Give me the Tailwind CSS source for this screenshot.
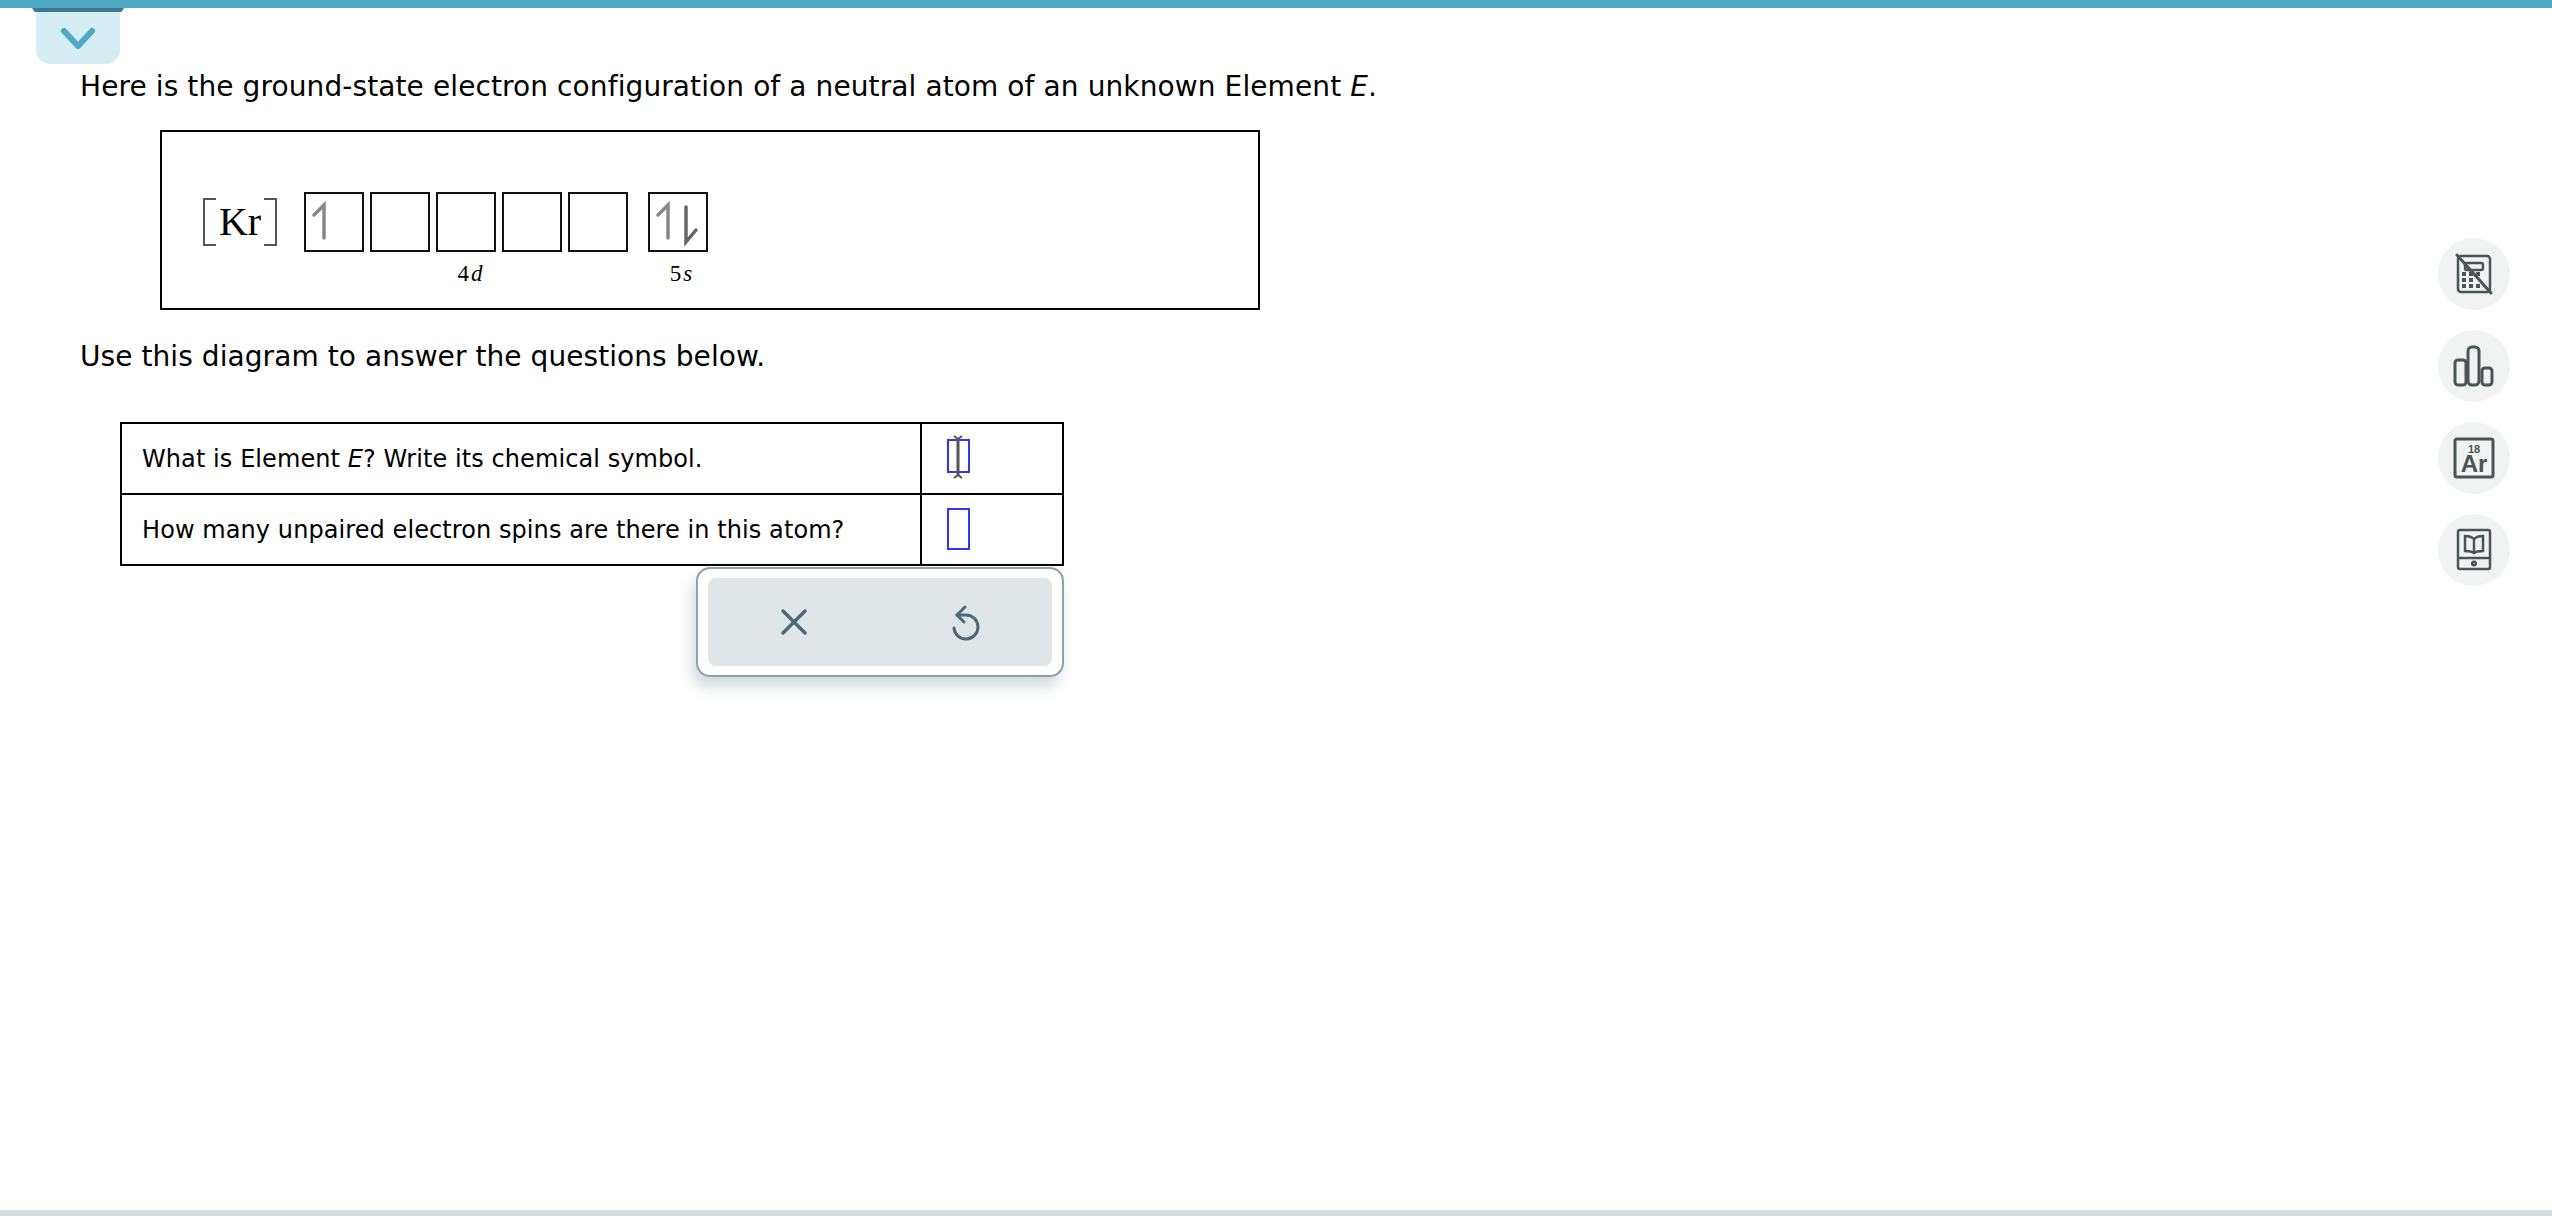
<!DOCTYPE html>
<html lang="en">
<head>
  <meta charset="UTF-8" />
  <title>Electron configuration question</title>
  <script src="https://cdn.jsdelivr.net/npm/@tailwindcss/browser@4"></script>
</head>
<body class="bg-white font-['DejaVu_Sans',sans-serif] text-black">
<div class="relative flex flex-col h-[1216px] w-[2552px] overflow-hidden">

  <div class="h-2 bg-[#4fa9c6] shrink-0"></div>

  <!-- collapse tab -->
  <div class="absolute left-8 top-2 w-[92px] flex flex-col items-center">
    <div class="h-1 w-full bg-[#3a7a8f] [clip-path:polygon(0_0,100%_0,97%_100%,3%_100%)]"></div>
    <div class="w-[84px] h-[52px] bg-[#d4eef4] rounded-b-[14px] flex items-center justify-center">
      <svg class="mt-[2px]" width="36" height="24" viewBox="0 0 36 24" fill="none" stroke="#4fa9c6" stroke-width="6" stroke-linecap="round" stroke-linejoin="round"><path d="M4 4 L18 19 L32 4"/></svg>
    </div>
  </div>

  <main class="flex-1 pl-20">
    <p class="mt-[61px] h-9 leading-9 text-[28px] tracking-[0.1px]">Here is the ground-state electron configuration of a neutral atom of an unknown Element <i>E</i>.</p>

    <!-- orbital diagram -->
    <div class="mt-[25px] ml-20 w-[1100px] h-[180px] border-2 border-black pl-[41px] pt-[60px] font-['Liberation_Serif',serif]">
      <div class="flex items-start">
        <div class="flex items-center h-[48px] mt-[6px] w-[74px] justify-between">
          <span class="w-[13px] h-[48px] border-[2.5px] border-r-0 border-[#555]"></span>
          <span class="text-[40px] leading-none">Kr</span>
          <span class="w-[13px] h-[48px] border-[2.5px] border-l-0 border-[#555]"></span>
        </div>
        <div class="ml-[27px]">
          <div class="flex gap-[6px]">
            <div class="w-[60px] h-[60px] border-2 border-[#111]">
              <svg width="56" height="56" viewBox="0 0 56 56" fill="none" stroke-width="3.5" stroke-linecap="round"><path stroke="#888" d="M18 44 V11 L8 21"/></svg>
            </div>
            <div class="w-[60px] h-[60px] border-2 border-[#111]"></div>
            <div class="w-[60px] h-[60px] border-2 border-[#111]"></div>
            <div class="w-[60px] h-[60px] border-2 border-[#111]"></div>
            <div class="w-[60px] h-[60px] border-2 border-[#111]"></div>
          </div>
          <div class="text-center text-[23px] leading-none mt-[10px] pl-[10px] tracking-[2px]">4<i>d</i></div>
        </div>
        <div class="ml-5">
          <div class="w-[60px] h-[60px] border-2 border-[#111]">
            <svg width="56" height="56" viewBox="0 0 56 56" fill="none" stroke-width="3.5" stroke-linecap="round"><path stroke="#888" d="M18 44 V11 L8 21"/><path stroke="#666" d="M36 13 V48 L46 36"/></svg>
          </div>
          <div class="text-center text-[23px] leading-none mt-[10px] pl-[8px] tracking-[2px]">5<i>s</i></div>
        </div>
      </div>
    </div>

    <p class="mt-[29px] h-9 leading-9 text-[28px] tracking-[0.07px]">Use this diagram to answer the questions below.</p>

    <!-- questions -->
    <div class="relative mt-[47px] ml-10 w-[944px]">
      <table class="w-full table-fixed border-collapse border-2 border-black text-[24px] tracking-[0.08px]">
        <tbody>
          <tr class="h-[71px]">
            <td class="border-2 border-black pl-[20px]">What is Element <i>E</i>? Write its chemical symbol.</td>
            <td class="w-[142px] border-2 border-l border-black pl-[25px]">
              <div class="relative w-[23px] h-[34px] border-2 border-[#3333ff] mb-[6px]">
                <svg class="absolute -left-[2px] -top-[6px]" width="23" height="44" viewBox="0 0 23 44" fill="none" stroke="#555" stroke-width="2"><path d="M7 1 L11 4 L15 1 M7 43 L11 40 L15 43"/><path stroke-width="3" d="M11 4 V40"/></svg>
              </div>
            </td>
          </tr>
          <tr class="h-[71px]">
            <td class="border-2 border-black pl-[20px]">How many unpaired electron spins are there in this atom?</td>
            <td class="border-2 border-l border-black pl-[25px]">
              <div class="w-[23px] h-[42px] border-2 border-[#3333ff] mb-[2px]"></div>
            </td>
          </tr>
        </tbody>
      </table>

      <!-- answer tools -->
      <div class="absolute right-0 top-[145px] w-[368px] h-[110px] bg-white border-2 border-[#8aa3ad] rounded-[14px] px-[10px] py-[9px] shadow-[-4px_10px_14px_rgba(100,125,135,0.28)]">
        <div class="w-full h-full bg-[#e0e5e8] rounded-lg flex items-center pl-[66px] gap-[132px]">
          <svg width="40" height="40" viewBox="0 0 40 40" fill="none" stroke="#4a6a76" stroke-width="3.5" stroke-linecap="round"><path d="M9 9 L31 31 M31 9 L9 31"/></svg>
          <svg width="40" height="40" viewBox="0 0 40 40" fill="none" stroke="#4a6a76" stroke-width="3" stroke-linecap="round" stroke-linejoin="round"><path d="M11 13 H20 A12 12 0 1 1 8 26"/><path d="M19 5 L11 13 L18 20"/></svg>
        </div>
      </div>
    </div>
  </main>

  <!-- side tools -->
  <aside class="absolute left-[2438px] top-[238px] flex flex-col gap-5">
    <div class="w-[72px] h-[72px] rounded-full bg-[#f1f3f3]">
      <svg width="72" height="72" viewBox="0 0 72 72" fill="none" stroke="#4a5454" stroke-width="2.5" stroke-linecap="round"><rect x="20" y="18" width="32" height="36" rx="3"/><rect x="27" y="25" width="18" height="7" rx="2"/><path stroke-width="3" d="M19 17 L53 55"/><g fill="#4a5454" stroke="none"><rect x="24" y="34" width="4" height="4"/><rect x="31" y="34" width="4" height="4"/><rect x="38" y="34" width="4" height="4"/><rect x="24" y="40" width="4" height="4"/><rect x="31" y="40" width="4" height="4"/><rect x="24" y="46" width="4" height="4"/><rect x="31" y="46" width="4" height="4"/><rect x="38" y="46" width="4" height="4"/></g></svg>
    </div>
    <div class="w-[72px] h-[72px] rounded-full bg-[#f1f3f3]">
      <svg width="72" height="72" viewBox="0 0 72 72" fill="none" stroke="#4a5454" stroke-width="3"><rect x="17" y="30" width="11" height="25" rx="3"/><rect x="30" y="17" width="11" height="38" rx="4"/><rect x="44" y="38" width="10" height="17" rx="3"/></svg>
    </div>
    <div class="w-[72px] h-[72px] rounded-full bg-[#f1f3f3]">
      <svg width="72" height="72" viewBox="0 0 72 72" fill="none"><rect x="17" y="17" width="38" height="38" rx="2" stroke="#4a5454" stroke-width="3"/><text x="36" y="31" text-anchor="middle" fill="#4a5454" font-family="Liberation Sans" font-size="11" font-weight="700">18</text><text x="36" y="50" text-anchor="middle" fill="#4a5454" font-family="Liberation Sans" font-size="24" font-weight="700">Ar</text></svg>
    </div>
    <div class="w-[72px] h-[72px] rounded-full bg-[#f1f3f3]">
      <svg width="72" height="72" viewBox="0 0 72 72" fill="none" stroke="#4a5454" stroke-width="2.5"><rect x="20" y="16" width="32" height="39" rx="2"/><path d="M20 44 H52"/><circle cx="36" cy="49.5" r="1.8"/><path d="M36 25 C33 22 30 22 27 22 V37 C30 37 33 37 36 39 C39 37 42 37 45 37 V22 C42 22 39 22 36 25 Z M36 25 V39"/></svg>
    </div>
  </aside>

  <div class="h-[6px] bg-[#d3dcdf] shrink-0"></div>
</div>
</body>
</html>
